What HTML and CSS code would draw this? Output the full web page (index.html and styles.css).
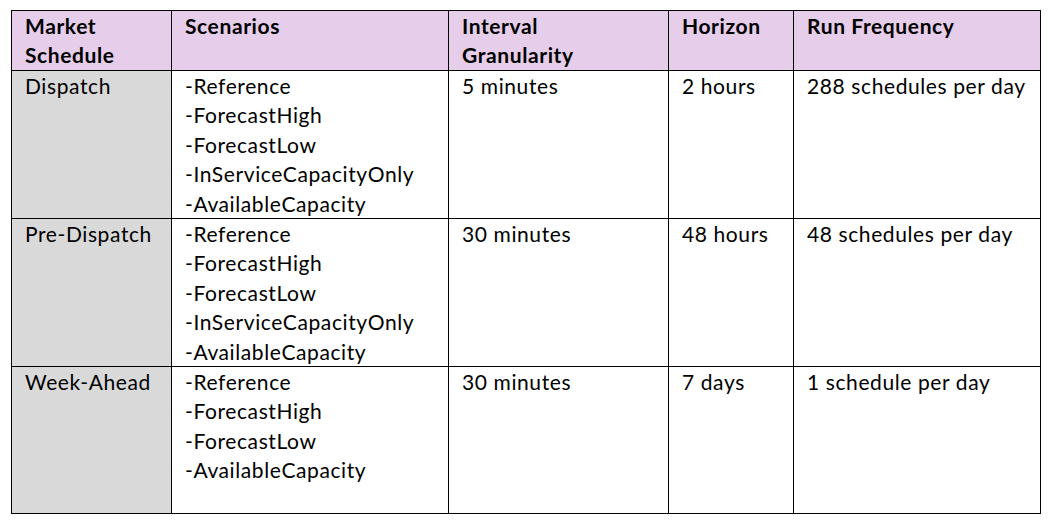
FILE: index.html
```html
<!DOCTYPE html>
<html>
<head>
<meta charset="utf-8">
<link rel="stylesheet" href="styles.css">
</head>
<body>
<table class="sched">
  <colgroup>
    <col class="c1"><col class="c2"><col class="c3"><col class="c4"><col class="c5">
  </colgroup>
  <thead>
    <tr class="head">
      <th>Market<br>Schedule</th>
      <th>Scenarios</th>
      <th>Interval<br>Granularity</th>
      <th>Horizon</th>
      <th>Run Frequency</th>
    </tr>
  </thead>
  <tbody>
    <tr class="r1">
      <td class="name">Dispatch</td>
      <td>-Reference<br>-ForecastHigh<br>-ForecastLow<br>-InServiceCapacityOnly<br>-AvailableCapacity</td>
      <td>5 minutes</td>
      <td>2 hours</td>
      <td>288 schedules per day</td>
    </tr>
    <tr class="r2">
      <td class="name">Pre-Dispatch</td>
      <td>-Reference<br>-ForecastHigh<br>-ForecastLow<br>-InServiceCapacityOnly<br>-AvailableCapacity</td>
      <td>30 minutes</td>
      <td>48 hours</td>
      <td>48 schedules per day</td>
    </tr>
    <tr class="r3">
      <td class="name">Week-Ahead</td>
      <td>-Reference<br>-ForecastHigh<br>-ForecastLow<br>-AvailableCapacity</td>
      <td>30 minutes</td>
      <td>7 days</td>
      <td>1 schedule per day</td>
    </tr>
  </tbody>
</table>
</body>
</html>
```
FILE: styles.css
```css
html, body {
  margin: 0;
  padding: 0;
  background: #ffffff;
}
body {
  padding: 10px 0 0 11px;
  font-family: Lato, "Liberation Sans", sans-serif;
  font-size: 21px;
  letter-spacing: 0.6px;
  color: #000;
}
.sched {
  border-collapse: collapse;
  table-layout: fixed;
  width: 1029px;
}
.c1 { width: 160px; }
.c2 { width: 277px; }
.c3 { width: 220px; }
.c4 { width: 125px; }
.c5 { width: 247px; }
.sched th, .sched td {
  border: 1px solid #000;
  vertical-align: top;
  text-align: left;
  padding: 0 4px 0 13px;
  line-height: 29.4px;
  white-space: nowrap;
}
.sched th {
  font-weight: bold;
  background: #e6cde9;
}
.head { height: 60px; }
.r1, .r2 { height: 148px; }
.r3 { height: 147px; }
.name { background: #d9d9d9; }
```
